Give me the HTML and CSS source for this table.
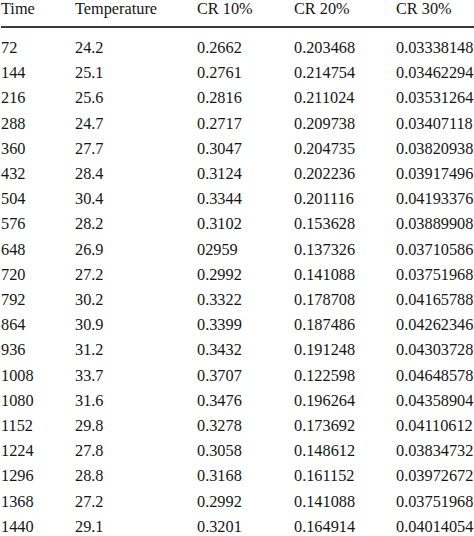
FILE: index.html
```html
<!DOCTYPE html>
<html>
<head>
<meta charset="utf-8">
<link rel="stylesheet" href="styles.css">
</head>
<body>
<table class="data">
<thead>
<tr><th class="c1">Time</th><th class="c2">Temperature</th><th class="c3">CR 10%</th><th class="c4">CR 20%</th><th class="c5">CR 30%</th></tr>
</thead>
<tbody>
<tr class="first"><td>72</td><td>24.2</td><td>0.2662</td><td>0.203468</td><td>0.03338148</td></tr>
<tr><td>144</td><td>25.1</td><td>0.2761</td><td>0.214754</td><td>0.03462294</td></tr>
<tr><td>216</td><td>25.6</td><td>0.2816</td><td>0.211024</td><td>0.03531264</td></tr>
<tr><td>288</td><td>24.7</td><td>0.2717</td><td>0.209738</td><td>0.03407118</td></tr>
<tr><td>360</td><td>27.7</td><td>0.3047</td><td>0.204735</td><td>0.03820938</td></tr>
<tr><td>432</td><td>28.4</td><td>0.3124</td><td>0.202236</td><td>0.03917496</td></tr>
<tr><td>504</td><td>30.4</td><td>0.3344</td><td>0.201116</td><td>0.04193376</td></tr>
<tr><td>576</td><td>28.2</td><td>0.3102</td><td>0.153628</td><td>0.03889908</td></tr>
<tr><td>648</td><td>26.9</td><td>02959</td><td>0.137326</td><td>0.03710586</td></tr>
<tr><td>720</td><td>27.2</td><td>0.2992</td><td>0.141088</td><td>0.03751968</td></tr>
<tr><td>792</td><td>30.2</td><td>0.3322</td><td>0.178708</td><td>0.04165788</td></tr>
<tr><td>864</td><td>30.9</td><td>0.3399</td><td>0.187486</td><td>0.04262346</td></tr>
<tr><td>936</td><td>31.2</td><td>0.3432</td><td>0.191248</td><td>0.04303728</td></tr>
<tr><td>1008</td><td>33.7</td><td>0.3707</td><td>0.122598</td><td>0.04648578</td></tr>
<tr><td>1080</td><td>31.6</td><td>0.3476</td><td>0.196264</td><td>0.04358904</td></tr>
<tr><td>1152</td><td>29.8</td><td>0.3278</td><td>0.173692</td><td>0.04110612</td></tr>
<tr><td>1224</td><td>27.8</td><td>0.3058</td><td>0.148612</td><td>0.03834732</td></tr>
<tr><td>1296</td><td>28.8</td><td>0.3168</td><td>0.161152</td><td>0.03972672</td></tr>
<tr><td>1368</td><td>27.2</td><td>0.2992</td><td>0.141088</td><td>0.03751968</td></tr>
<tr><td>1440</td><td>29.1</td><td>0.3201</td><td>0.164914</td><td>0.04014054</td></tr>
</tbody>
</table>
</body>
</html>
```
FILE: styles.css
```css
html, body {
  margin: 0;
  padding: 0;
  background: #ffffff;
  overflow: hidden;
}
body {
  font-family: "Liberation Serif", "Times New Roman", serif;
  font-size: 16.3px;
  color: #151515;
}
.data {
  border-collapse: collapse;
  table-layout: fixed;
  width: 480px;
  margin-left: 1px;
}
.data th, .data td {
  padding: 0;
  text-align: left;
  font-weight: normal;
  white-space: nowrap;
  vertical-align: top;
}
.data th {
  line-height: 18px;
  height: 18px;
  padding-bottom: 8px;
  border-bottom: 2px solid #3a3a3a;
}
.data td {
  line-height: 25.2px;
  height: 25.2px;
}
.data tr.first td {
  padding-top: 7px;
}
.c1 { width: 74px; }
.c2 { width: 122px; }
.c3 { width: 97px; }
.c4 { width: 102px; }
.c5 { width: 85px; }
```
